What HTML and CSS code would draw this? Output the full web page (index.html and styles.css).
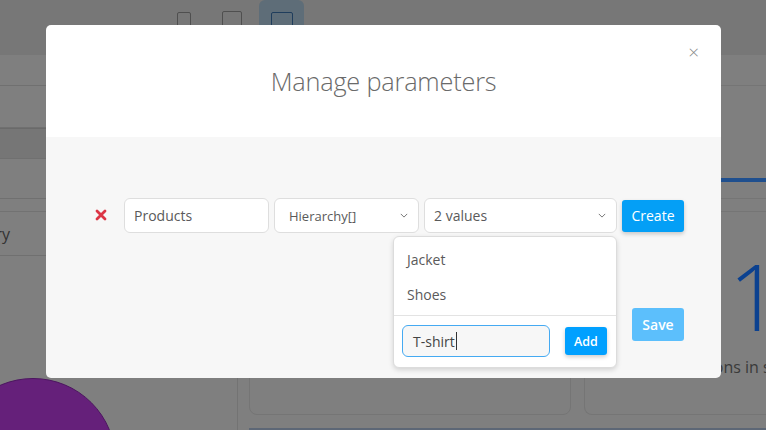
FILE: index.html
```html
<!DOCTYPE html>
<html>
<head>
<meta charset="utf-8">
<link rel="stylesheet" href="styles.css">
</head>
<body>
<div class="page">
  <div class="topbar">
    <span class="tb-icon tb-a"></span>
    <span class="tb-icon tb-b"></span>
    <span class="tb-active"><span class="tb-icon tb-c"></span></span>
  </div>
  <div class="content">
    <aside class="sidebar">
      <div class="sb-row r1"></div>
      <div class="sb-row r2"></div>
      <div class="sb-row r3"></div>
      <div class="sb-row r4"></div>
      <div class="sb-row r5">Inventory</div>
      <div class="avatar"></div>
    </aside>
    <main class="main">
      <div class="cards">
        <div class="card"></div>
        <div class="card stat">
          <div class="tabs"><span class="tab-line"></span></div>
          <div class="stat-lines"></div>
          <div class="stat-num">9, 1</div>
          <div class="stat-label">Positions in stock</div>
        </div>
      </div>
      <div class="strip"></div>
    </main>
  </div>

  <div class="overlay">
    <div class="modal">
      <div class="modal-head">
        <h1 class="modal-title">Manage parameters</h1>
        <span class="close">&#215;</span>
      </div>
      <div class="modal-body">
        <div class="param-row">
          <svg class="remove" viewBox="0 0 12 12" width="12" height="12"><path d="M2 2l8 8M10 2l-8 8" stroke="#dc3545" stroke-width="2.8" stroke-linecap="round"/></svg>
          <div class="field name">Products</div>
          <div class="field select type">Hierarchy[]<svg class="chev" viewBox="0 0 10 6" width="8" height="5"><path d="M1 1l4 4 4-4" fill="none" stroke="#666" stroke-width="1.1"/></svg></div>
          <div class="values-wrap">
            <div class="field select values">2 values<svg class="chev" viewBox="0 0 10 6" width="8" height="5"><path d="M1 1l4 4 4-4" fill="none" stroke="#666" stroke-width="1.1"/></svg></div>
            <div class="dropdown">
              <div class="dd-item">Jacket</div>
              <div class="dd-item">Shoes</div>
              <div class="dd-foot">
                <div class="dd-input">T-shirt<span class="caret"></span></div>
                <button class="btn add">Add</button>
              </div>
            </div>
          </div>
          <button class="btn create">Create</button>
        </div>
        <div class="save-row">
          <button class="btn save">Save</button>
        </div>
      </div>
    </div>
  </div>
</div>
</body>
</html>
```
FILE: styles.css
```css
* { box-sizing: border-box; }
html, body { margin: 0; padding: 0; }
body {
  width: 766px;
  height: 430px;
  overflow: hidden;
  font-family: "Open Sans", "Noto Sans", sans-serif;
  background: #7f7f7f;
}
.page {
  position: relative;
  width: 766px;
  height: 430px;
  overflow: hidden;
}
.topbar {
  height: 55px;
  background: #777777;
  display: flex;
  align-items: flex-start;
  padding-left: 177px;
  padding-top: 12px;
}
.tb-icon {
  display: block;
  border: 1.5px solid #4f4f4f;
  border-radius: 2px;
}
.tb-a { width: 14px; height: 20px; }
.tb-b { width: 20px; height: 20px; margin-left: 31px; margin-top: -1px; }
.tb-active {
  margin-left: 17px;
  margin-top: -12px;
  width: 45px;
  height: 40px;
  background: #5e6d78;
  border-radius: 6px;
  padding: 12px 0 0 12px;
}
.tb-c { width: 22px; height: 20px; border-color: #1f3d5c; }

.content {
  display: flex;
  height: 375px;
}
.sidebar {
  position: relative;
  width: 238px;
  border-right: 1px solid #737373;
  flex: none;
}
.sb-row {
  border-bottom: 1px solid #707070;
  font-size: 16px;
  color: #333;
  display: flex;
  align-items: center;
  justify-content: flex-end;
  padding-right: 227px;
  white-space: nowrap;
}
.r1 { height: 31px; }
.r2 { height: 42px; }
.r3 { height: 31px; background: #767676; border-top: 1px solid #6a6a6a; }
.r4 { height: 40px; margin-top: 0; }
.r5 { height: 45px; border-top: 1px solid #727272; margin-top: 12px; }
.avatar {
  position: absolute;
  left: -50px;
  top: 323px;
  width: 166px;
  height: 166px;
  border-radius: 50%;
  background: #65207a;
  border: 1.5px solid #4c1560;
}
.main {
  flex: 1;
  padding: 0 0 0 11px;
  display: flex;
  flex-direction: column;
}
.cards {
  display: grid;
  grid-template-columns: 322px 1fr;
  gap: 13px;
  height: 360px;
  padding-top: 30px;
  flex: none;
}
.card {
  border: 1px solid #757575;
  border-radius: 8px;
}
.stat {
  border-right: none;
  border-radius: 8px 0 0 8px;
  position: relative;
  overflow: hidden;
}
.tabs {
  height: 96px;
  position: relative;
}
.tab-line {
  position: absolute;
  right: 0;
  bottom: 0;
  width: 60px;
  height: 4px;
  background: #1f4f8e;
}
.stat-lines {
  margin-top: 16px;
  border-top: 1px solid #757575;
  border-bottom: 1px solid #757575;
  height: 14px;
}
.stat-num {
  text-align: right;
  font-size: 92px;
  line-height: 1;
  color: #0b4190;
  margin-top: 38px;
  margin-right: -13px;
  font-weight: 300;
  letter-spacing: -2px;
  white-space: nowrap;
}
.stat-label {
  text-align: right;
  font-size: 16px;
  color: #3a3a3a;
  margin-top: 14px;
  margin-right: -36px;
  white-space: nowrap;
}
.strip {
  margin-top: 13px;
  height: 4px;
  flex: none;
  background: #5d6776;
}

/* overlay + modal */
.overlay {
  position: absolute;
  inset: 0;
  display: flex;
  padding: 25px 0 0 46px;
}
.modal {
  width: 675px;
  height: 353px;
  border-radius: 5px;
  overflow: hidden;
  display: flex;
  flex-direction: column;
}
.modal-head {
  height: 112px;
  background: #ffffff;
  display: flex;
  align-items: center;
  justify-content: center;
  position: relative;
}
.modal-title {
  margin: 0;
  font-weight: 300;
  font-size: 25.3px;
  color: #6a6a6a;
  letter-spacing: -0.2px;
}
.close {
  position: absolute;
  right: 22px;
  top: 18px;
  font-size: 19px;
  color: #888;
  font-weight: 300;
  line-height: 1;
}
.modal-body {
  flex: 1;
  background: #f7f7f7;
  padding: 61px 37px 0 49px;
  display: flex;
  flex-direction: column;
}
.param-row {
  display: flex;
  align-items: center;
  gap: 5px;
  height: 35px;
}
.remove {
  display: block;
  flex: none;
  margin-right: 12px;
  margin-top: -1px;
}
.field {
  height: 35px;
  background: #fff;
  border: 1px solid #dedede;
  border-radius: 6px;
  color: #5a5a5a;
  font-size: 14px;
  display: flex;
  align-items: center;
  padding-left: 9px;
}
.name { width: 145px; }
.select { position: relative; justify-content: space-between; padding-right: 10px; }
.type { width: 145px; padding-left: 14px; font-size: 13px; }
.values { width: 193px; }
.chev { display: block; }
.values-wrap { position: relative; }
.dropdown {
  position: absolute;
  right: 0;
  top: 38px;
  width: 224px;
  height: 132px;
  background: #fff;
  border: 1px solid #dcdcdc;
  border-radius: 6px;
  box-shadow: 0 2px 5px rgba(0,0,0,0.15);
  z-index: 2;
  padding-top: 5px;
}
.dd-item {
  height: 35px;
  display: flex;
  align-items: center;
  padding-left: 13px;
  color: #5a5a5a;
  font-size: 14px;
}
.dd-foot {
  border-top: 1px solid #e3e3e3;
  margin-top: 3px;
  padding: 9px 9px 0 8px;
  display: flex;
  align-items: center;
  justify-content: space-between;
}
.dd-input {
  width: 148px;
  height: 32px;
  border: 1px solid #45aaf2;
  border-radius: 6px;
  background: #f7f7f7;
  display: flex;
  align-items: center;
  padding-left: 10px;
  font-size: 14px;
  color: #444;
}
.caret {
  display: inline-block;
  width: 1px;
  height: 18px;
  background: #333;
  margin-left: 1px;
}
.btn {
  border: none;
  color: #fff;
  font-family: "Open Sans", "Noto Sans", sans-serif;
  border-radius: 3px;
  padding: 0;
}
.create {
  width: 62px;
  height: 32px;
  background: #049ff6;
  font-size: 14px;
  box-shadow: 0 2px 4px rgba(0,0,0,0.2);
}
.add {
  width: 42px;
  height: 28px;
  background: #00a0ff;
  font-size: 12.5px;
  font-weight: 600;
  box-shadow: 0 2px 4px rgba(0,0,0,0.2);
}
.save-row {
  display: flex;
  justify-content: flex-end;
  margin-top: 75px;
}
.save {
  width: 52px;
  height: 33px;
  background: #5cbffc;
  font-size: 14px;
  font-weight: 600;
}
```
